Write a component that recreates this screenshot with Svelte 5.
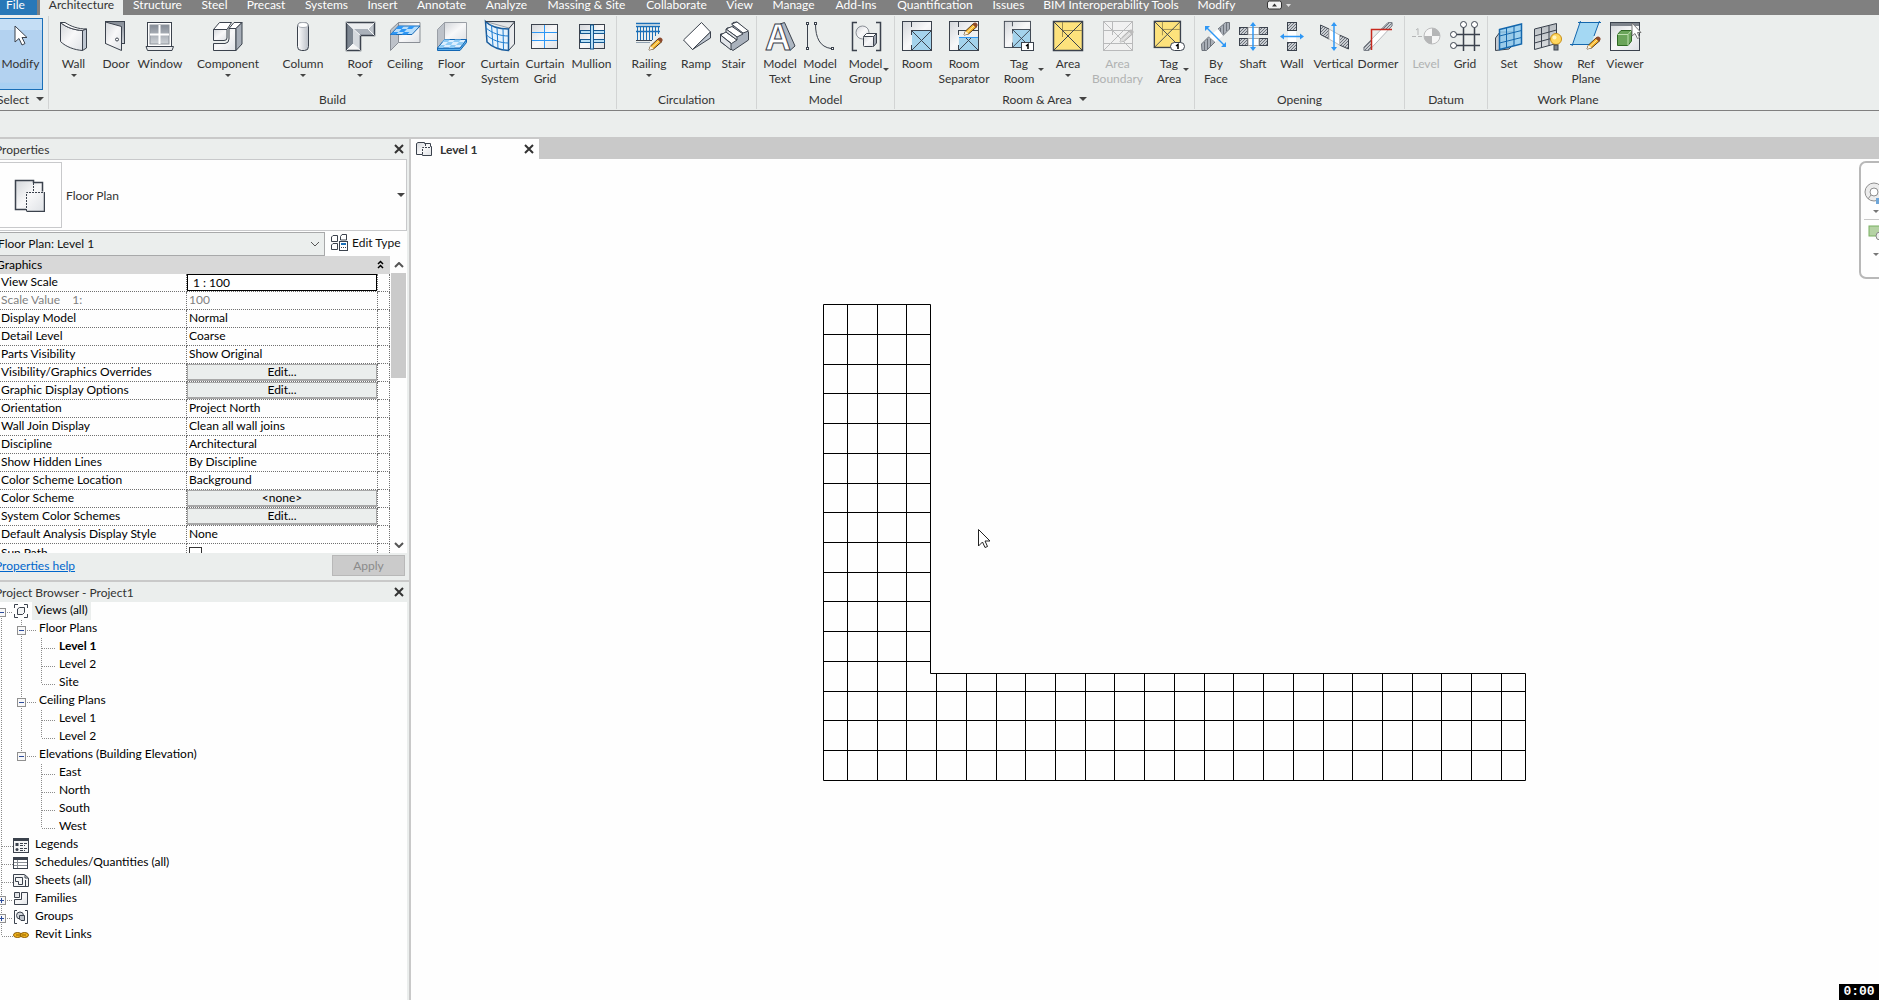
<script lang="ts">
	type Tool = {
		label: string[];
		icon: string;
		width: number;
		menu?: 'below' | 'side';
		disabled?: boolean;
	};
	type Panel = { title: string; tools: Tool[]; expandable?: boolean };
	type Property = { name: string; value: string; kind?: 'input' | 'button' | 'muted' | 'check' };
	type Node = {
		label: string;
		depth: number;
		icon?: string;
		toggle?: '+' | '-';
		last?: boolean;
		trunk?: boolean;
		bold?: boolean;
		selected?: boolean;
	};

	const tabs = [
		{ name: 'Architecture', width: 83 },
		{ name: 'Structure', width: 69 },
		{ name: 'Steel', width: 45 },
		{ name: 'Precast', width: 58 },
		{ name: 'Systems', width: 63 },
		{ name: 'Insert', width: 49 },
		{ name: 'Annotate', width: 69 },
		{ name: 'Analyze', width: 61 },
		{ name: 'Massing & Site', width: 99 },
		{ name: 'Collaborate', width: 81 },
		{ name: 'View', width: 45 },
		{ name: 'Manage', width: 63 },
		{ name: 'Add-Ins', width: 62 },
		{ name: 'Quantification', width: 96 },
		{ name: 'Issues', width: 51 },
		{ name: 'BIM Interoperability Tools', width: 154 },
		{ name: 'Modify', width: 57 }
	];
	let activeTab = $state('Architecture');

	const panels: Panel[] = [
		{
			title: 'Build',
			tools: [
				{ label: ['Wall'], icon: 'wall', width: 45, menu: 'below' },
				{ label: ['Door'], icon: 'door', width: 40 },
				{ label: ['Window'], icon: 'window', width: 48 },
				{ label: ['Component'], icon: 'component', width: 88, menu: 'below' },
				{ label: ['Column'], icon: 'column', width: 62, menu: 'below' },
				{ label: ['Roof'], icon: 'roof', width: 52, menu: 'below' },
				{ label: ['Ceiling'], icon: 'ceiling', width: 38 },
				{ label: ['Floor'], icon: 'floor', width: 55, menu: 'below' },
				{ label: ['Curtain', 'System'], icon: 'curtainSystem', width: 42 },
				{ label: ['Curtain', 'Grid'], icon: 'curtainGrid', width: 48 },
				{ label: ['Mullion'], icon: 'mullion', width: 45 }
			]
		},
		{
			title: 'Circulation',
			tools: [
				{ label: ['Railing'], icon: 'railing', width: 60, menu: 'below' },
				{ label: ['Ramp'], icon: 'ramp', width: 34 },
				{ label: ['Stair'], icon: 'stair', width: 41 }
			]
		},
		{
			title: 'Model',
			tools: [
				{ label: ['Model', 'Text'], icon: 'modelText', width: 42 },
				{ label: ['Model', 'Line'], icon: 'modelLine', width: 38 },
				{ label: ['Model', 'Group'], icon: 'modelGroup', width: 53, menu: 'side' }
			]
		},
		{
			title: 'Room & Area',
			expandable: true,
			tools: [
				{ label: ['Room'], icon: 'room', width: 40 },
				{ label: ['Room', 'Separator'], icon: 'roomSeparator', width: 54 },
				{ label: ['Tag', 'Room'], icon: 'tagRoom', width: 56, menu: 'side' },
				{ label: ['Area'], icon: 'area', width: 42, menu: 'below' },
				{ label: ['Area', 'Boundary'], icon: 'areaBoundary', width: 57, disabled: true },
				{ label: ['Tag', 'Area'], icon: 'tagArea', width: 46, menu: 'side' }
			]
		},
		{
			title: 'Opening',
			tools: [
				{ label: ['By', 'Face'], icon: 'byFace', width: 38 },
				{ label: ['Shaft'], icon: 'shaft', width: 36 },
				{ label: ['Wall'], icon: 'wallOpening', width: 42 },
				{ label: ['Vertical'], icon: 'vertical', width: 41 },
				{ label: ['Dormer'], icon: 'dormer', width: 48 }
			]
		},
		{
			title: 'Datum',
			tools: [
				{ label: ['Level'], icon: 'level', width: 38, disabled: true },
				{ label: ['Grid'], icon: 'grid', width: 40 }
			]
		},
		{
			title: 'Work Plane',
			tools: [
				{ label: ['Set'], icon: 'set', width: 38 },
				{ label: ['Show'], icon: 'show', width: 40 },
				{ label: ['Ref', 'Plane'], icon: 'refPlane', width: 36 },
				{ label: ['Viewer'], icon: 'viewer', width: 42 }
			]
		}
	];

	const properties: Property[] = [
		{ name: 'View Scale', value: '1 : 100', kind: 'input' },
		{ name: 'Scale Value    1:', value: '100', kind: 'muted' },
		{ name: 'Display Model', value: 'Normal' },
		{ name: 'Detail Level', value: 'Coarse' },
		{ name: 'Parts Visibility', value: 'Show Original' },
		{ name: 'Visibility/Graphics Overrides', value: 'Edit...', kind: 'button' },
		{ name: 'Graphic Display Options', value: 'Edit...', kind: 'button' },
		{ name: 'Orientation', value: 'Project North' },
		{ name: 'Wall Join Display', value: 'Clean all wall joins' },
		{ name: 'Discipline', value: 'Architectural' },
		{ name: 'Show Hidden Lines', value: 'By Discipline' },
		{ name: 'Color Scheme Location', value: 'Background' },
		{ name: 'Color Scheme', value: '<none>', kind: 'button' },
		{ name: 'System Color Schemes', value: 'Edit...', kind: 'button' },
		{ name: 'Default Analysis Display Style', value: 'None' },
		{ name: 'Sun Path', value: '', kind: 'check' }
	];

	const nodes: Node[] = [
		{ label: 'Views (all)', depth: 0, icon: 'views', toggle: '-', selected: true },
		{ label: 'Floor Plans', depth: 1, toggle: '-', trunk: true },
		{ label: 'Level 1', depth: 2, trunk: true, bold: true },
		{ label: 'Level 2', depth: 2, trunk: true },
		{ label: 'Site', depth: 2, trunk: true, last: true },
		{ label: 'Ceiling Plans', depth: 1, toggle: '-', trunk: true },
		{ label: 'Level 1', depth: 2, trunk: true },
		{ label: 'Level 2', depth: 2, trunk: true, last: true },
		{ label: 'Elevations (Building Elevation)', depth: 1, toggle: '-', last: true },
		{ label: 'East', depth: 2 },
		{ label: 'North', depth: 2 },
		{ label: 'South', depth: 2 },
		{ label: 'West', depth: 2, last: true },
		{ label: 'Legends', depth: 0, icon: 'legends' },
		{ label: 'Schedules/Quantities (all)', depth: 0, icon: 'schedules' },
		{ label: 'Sheets (all)', depth: 0, icon: 'sheets' },
		{ label: 'Families', depth: 0, icon: 'families', toggle: '+' },
		{ label: 'Groups', depth: 0, icon: 'groups', toggle: '+' },
		{ label: 'Revit Links', depth: 0, icon: 'links', last: true }
	];
	const guideWidth = [13, 36, 56];

	// ceiling grid: an L of tiles, clipped by its walls
	const STEP = 29.72;
	const columns = Array.from({ length: 23 }, (_, i) => ({
		x: Math.round(24 + i * STEP),
		top: i < 3 ? 0 : 369
	}));
	const rows = Array.from({ length: 15 }, (_, i) => ({
		y: Math.round(30 + i * STEP),
		right: i < 12 ? 107 : 702
	}));

	// icon parts
	const ink = '#3b424d';
	const blue = '#1a6fb8';
	const sky = '#2e97f5';
	const pencil = (x: number, y: number, grey = false) => `<g transform="translate(${x} ${y})">
		<path d="M1 13 2.500 9 10.500 1.500 14 4.500 5.500 12Z" fill="${grey ? '#d5d5d5' : '#f7b52c'}" stroke="${grey ? '#aaa' : '#54381c'}"/>
		<path d="M4 10.500 12 3" stroke="${grey ? '#eee' : '#fff0a8'}"/>
		<path d="M9.500 2.500 11 .800Q12.500 0 14 1.500T14 4.500L13 5.500Z" fill="${grey ? '#bbb' : '#8d4a2e'}"/>
		<path d="M1 13 2.500 9 5.500 12Z" fill="${grey ? '#ddd' : '#fff3dd'}"/></g>`;
	const roomBase = `<rect x="1.500" y="1.500" width="29" height="29" fill="url(#face)" stroke="${ink}"/>
		<rect x="10.500" y="10.500" width="20" height="20" fill="#a4d3ec" stroke="${ink}"/>
		<path d="M10.500 10.500 30.500 30.500M30.500 10.500 10.500 30.500M10.500 2V7" stroke="${ink}" fill="none"/>
		<path d="M10.500 15V25" stroke="#eef4f7"/>`;
	const areaBase = `<rect x="1.500" y="1.500" width="29" height="29" fill="#fde27c" stroke="${ink}" stroke-width="1.500"/>
		<path d="M10.500 2V17M10 10.500H30" stroke="#9a8a50" fill="none"/>
		<path d="M1.500 1.500 30.500 30.500M30.500 1.500 1.500 30.500" stroke="${ink}" fill="none"/>`;
	const arrowV = (x: number) =>
		`<path d="M${x} 4V29" stroke="${sky}" stroke-width="1.500"/><path d="M${x - 3} 6 ${x} 2 ${x + 3} 6ZM${x - 3} 27 ${x} 31 ${x + 3} 27Z" fill="${sky}"/>`;

	const icons: Record<string, string> = {
		modify: `<path d="M10 6V22L14 18.500 17 25 20 23.500 17 17.500H22Z" fill="#fff" stroke="${ink}"/>`,
		wall: `<g stroke="${ink}" stroke-linejoin="round"><path d="M2.500 2.500C9 8 17 10 24.500 10.500V30.500C17 30 8 27 2.500 21.500Z" fill="url(#face)"/>
			<path d="M2.500 2.500H7C13 6.500 20 9 28.500 9L24.500 10.500C17 10 9 8 2.500 2.500Z" fill="#fff"/><path d="M24.500 10.500 28.500 9V28L24.500 30.500Z" fill="#bfc7d1"/></g>`,
		door: `<rect x="5.500" y="1.500" width="19" height="22" fill="url(#dark)" stroke="${ink}"/>
			<path d="M5.500 2 21.500 6.500V30.500L5.500 23.500Z" fill="url(#face)" stroke="${ink}"/><circle cx="17" cy="19.500" r="1.500" fill="#fff" stroke="${ink}"/>`,
		window: `<rect x="3.500" y="2.500" width="24" height="24" fill="#fff" stroke="${ink}"/><rect x="6" y="5" width="19" height="19" fill="url(#dark)" stroke="#8d939b"/>
			<path d="M15.500 5V24M6 14.500H25" stroke="#fff" stroke-width="2"/><path d="M2 26.500H29.500L28 30.500H3.500Z" fill="#e8eaec" stroke="${ink}"/>`,
		component: `<g stroke="${ink}" stroke-linejoin="round"><path d="M1.500 23.500H13Q17 23 17 19V8.500H24V30.500H1.500Z" fill="url(#face)"/>
			<path d="M17 8.500 22 2.500H30L24 8.500Z" fill="#fff"/><path d="M24 8.500 30 2.500V24L24 30.500Z" fill="#a6adb7"/>
			<path d="M1.500 9.500H15V18Q15 20.500 12 20.500H1.500Z" fill="url(#face)"/><path d="M1.500 9.500 7.500 2.500H19.500L15 9.500Z" fill="#fff"/></g>`,
		column: `<rect x="10.500" y="2.500" width="11" height="28" rx="4" fill="url(#round)" stroke="${ink}"/><ellipse cx="16" cy="5" rx="5" ry="2.500" fill="#fff" stroke="#a9aeb5"/>`,
		roof: `<path d="M2.500 2.500H30.500L24 9H9Z" fill="#eceef0"/><path d="M2.500 2.500 9 9V24L2.500 30.500Z" fill="#7d8691"/><path d="M9 9H24L30.500 15.500H16.500Z" fill="#aab1ba"/><path d="M9 9 16.500 15.500V30.500L9 24Z" fill="#d5d9de"/>
			<path d="M30.500 2.500 24 9 30.500 15.500Z" fill="#bdc3ca"/><path d="M2.500 30.500 9 24 16.500 30.500Z" fill="#f5f5f5"/><path d="M2.500 2.500H30.500V15.500H16.500V30.500H2.500Z" fill="none" stroke="${ink}" stroke-width="1.500"/>
			<path d="M2.500 2.500 16.500 15.500M30.500 2.500 24 9 30.500 15.500M2.500 30.500 9 24 16.500 30.500" stroke="#f4f6f8" fill="none"/>`,
		ceiling: `<g stroke="#8a8f96"><path d="M9.500 2.500H31V22.500H9.500Z" fill="url(#face)"/><path d="M1.500 10 9.500 2.500V22.500L1.500 30.500Z" fill="#bdc2c9"/></g>
			<path d="M1.500 14.500 9.500 6H31L23 14.500Z" fill="#b7ddfb" stroke="#1367b4"/><path d="M7 9 9.500 6H15L12.500 9ZM18 9 20.500 6H26L23 9ZM10 12 12.500 9H18L15 12ZM4 12 1.500 14.500H7L9.500 12ZM15 12H20.500L18 14.500H12.500Z" fill="#2e97f5"/>`,
		floor: `<g stroke="#9a9fa6"><path d="M8.500 2.500H30.500V20H8.500Z" fill="url(#face)"/><path d="M1.500 9.500 8.500 2.500V20L1.500 28Z" fill="#bdc2c9"/></g>
			<path d="M1.500 28V30.500H24L30.500 22.500V19.500L24 28Z" fill="#5aaeea" stroke="#1367b4"/><path d="M1.500 28 8.500 19.500H30.500L24 28Z" fill="#dcefff" stroke="#1367b4"/><path d="M6 22 8.500 19.500H14L12 22ZM17 22 19 19.500H25L23 22ZM9 25 12 22H17L15 25ZM20 25 23 22H28L26 25ZM2.500 28 4.500 25H9L7 28ZM12.500 28 15 25H20L18 28Z" fill="#8ecbf5"/>`,
		curtainSystem: `<path d="M1.500 1.500 30.500 2 25 8Z" fill="#e4e6e8" stroke="#9aa0a8"/><path d="M24.500 9 30.500 2V24L24.500 30.500Z" fill="#e9ebed" stroke="${ink}"/>
			<path d="M1.500 1.500C6 6 15 9 24.500 9V30.500C15 30 8 27 3 22Z" fill="#e4f2fd" stroke="#1a5c9c" stroke-width="1.500"/><path d="M7.500 5 9 26.500M13 7.500 14 28.500M19 8.500 19.500 30M2 8C8 13 16 16 24.500 16M2.500 15C8 20 16 23 24.500 23" fill="none" stroke="#1a7bd0"/><path d="M1.500 1.500H31" stroke="${ink}"/>`,
		curtainGrid: `<rect x="2.500" y="4.500" width="26" height="24" fill="url(#face)" stroke="${ink}"/><path d="M15.500 5V28M3 12.500H28M3 20.500H28" stroke="${sky}"/>`,
		mullion: `<rect x="3.500" y="4.500" width="25" height="24" fill="url(#face)" stroke="${ink}"/><g fill="#b9e0f6" stroke="#15578f"><rect x="4.500" y="10.500" width="24" height="3"/><rect x="4.500" y="19.500" width="24" height="3"/><rect x="14.500" y="5" width="3" height="24"/></g>`,
		railing: `<path d="M3 3.500H27M3 6.500H27M3 11.500H27" stroke="${blue}" stroke-width="1.500"/><path d="M4.500 6V20M7.500 6V20M10.500 6V20M13.500 6V20M16.500 6V20M19.500 6V20M22.500 6V16M25.500 6V14" stroke="${blue}"/>
			<path d="M3 20.500H19" stroke="${ink}"/><path d="M3 22.500H17" stroke="#8fa0b0"/>${pencil(15, 17)}`,
		ramp: `<g stroke="${ink}" stroke-linejoin="round"><path d="M3.500 20 21.500 2.500 30.500 12 12.500 29.500Z" fill="#fff"/><path d="M30.500 12V18L12.500 29.500Z" fill="#bfc7d1"/></g>`,
		stair: `<g stroke="${ink}" stroke-linejoin="round"><path d="M15 2.500 19 2 30.500 12V20L15 30.500 2.500 22V14L9 13 9 8 15 7.500Z" fill="#aab2bd"/><path d="M2.500 15 8 12 19 20 13.500 23.500ZM8 9 14 6.500 25 14 19 17ZM13.500 4 19 2 30.500 11 25 13Z" fill="#fff"/><path d="M2.500 15V21.500L13 30V23.500ZM8 9V12L19 20V17Z" fill="#e2e5e9"/></g>`,
		modelText: `<path d="M16 4 20.500 2.500 31 26 26.500 30 21 27Z" fill="#aeb7c2" stroke="${ink}"/><text x="1" y="30" font-family="Liberation Sans" font-weight="bold" font-size="36" fill="#fff" stroke="${ink}">A</text>`,
		modelLine: `<g fill="none" stroke="${ink}"><path d="M3.500 4V28M11.500 4C11.500 18 16 27 27 28.500"/><g fill="#fff"><rect x="2.500" y="2.500" width="2" height="2"/><rect x="2.500" y="27.500" width="2" height="2"/><rect x="10.500" y="2.500" width="2" height="2"/><rect x="27.500" y="27.500" width="2" height="2"/></g></g>`,
		modelGroup: `<g stroke="${ink}"><path d="M7 2.500H2.500V30.500H7M26 2.500H30.500V30.500H26" fill="none" stroke-width="1.500"/><circle cx="12.500" cy="12.500" r="6.500" fill="url(#face)" stroke="#8a8f96"/>
			<path d="M13.500 16.500 16.500 13.500H26.500L23.500 16.500Z" fill="#fff"/><path d="M23.500 16.500 26.500 13.500V23L23.500 26.500Z" fill="#9da4ae"/><rect x="13.500" y="16.500" width="10" height="10" rx="1" fill="url(#face)"/></g>`,
		room: roomBase,
		roomSeparator: `${roomBase}<path d="M11 11H30V17H11Z" fill="#eef0f1"/><path d="M11 17.500H30" stroke="${sky}"/>${pencil(15, 2)}`,
		tagRoom: `<g transform="scale(.9)">${roomBase}</g><rect x="18.500" y="22.500" width="12" height="8" fill="#fff" stroke="${ink}"/><path d="M23 26 25 24.500V29" fill="none" stroke="#000" stroke-width="1.500"/>`,
		area: areaBase,
		areaBoundary: `<g stroke="#b9babb" fill="none"><rect x="1.500" y="1.500" width="29" height="29" fill="#f1f1f1"/><path d="M1.500 1.500 30.500 30.500M30.500 1.500 1.500 30.500M2 10.500H30M10.500 2V15M2 23.500H30"/></g>${pencil(17, 9, true)}`,
		tagArea: `<g transform="scale(.9)">${areaBase}</g><rect x="17.500" y="22.500" width="14" height="8" rx="4" fill="#fff" stroke="${ink}"/><path d="M23 26 25 24.500V29" fill="none" stroke="#000" stroke-width="1.500"/>`,
		byFace: `<path d="M1.500 24 9 16.500 15 22 6.500 30.500H2Z" fill="#a9afb7" stroke="#6d737b"/><path d="M18 9 25.500 2.500H29.500V9L23 15.500Z" fill="#a9afb7" stroke="#6d737b"/>
			<path d="M4.500 22V30M7.500 19V29M10.500 19V26M20.500 8V13M23.500 5V14M26.500 3V11" stroke="#6d737b"/>
			<path d="M9 16.500 18 9 23 15.500 15 22Z" fill="#fff"/><path d="M7 8 24 25" stroke="${sky}" stroke-width="1.500"/><path d="M5 6H10L5 11ZM26 27H21L26 22Z" fill="${sky}"/>`,
		shaft: `<g fill="url(#hatch)" stroke="${ink}"><rect x="2.500" y="7.500" width="8" height="7"/><rect x="22.500" y="7.500" width="8" height="7"/><rect x="2.500" y="18.500" width="8" height="7"/><rect x="22.500" y="18.500" width="8" height="7"/></g>
			<path d="M11 7.500H22V14.500H11ZM11 18.500H22V25.500H11Z" fill="#fff" stroke="#aaa"/>${arrowV(16)}`,
		wallOpening: `<g fill="url(#hatch)" stroke="${ink}"><rect x="11.500" y="2.500" width="9" height="8"/><rect x="11.500" y="22.500" width="9" height="8"/></g><rect x="12" y="11" width="8" height="11" fill="#fff"/>
			<path d="M6 16.500H26" stroke="${sky}" stroke-width="1.500"/><path d="M8 13.500 4 16.500 8 19.500ZM24 13.500 28 16.500 24 19.500Z" fill="${sky}"/>`,
		vertical: `<path d="M2.500 5 11 9V19L2.500 14.500ZM21.500 15 30.500 19V29L21.500 25Z" fill="url(#hatch)" stroke="${ink}"/><path d="M11 9 21.500 15V25L11 19Z" fill="#fff" stroke="#bbb"/>${arrowV(16)}`,
		dormer: `<path d="M2 30.500V27L26 2.500H30V6L7 30.500Z" fill="#fff" stroke="#b5b8bc"/><path d="M19.500 9 26 2.500H30V6L26.500 9.500ZM2 30.500V27L9.500 19.500V27.500L7 30.500Z" fill="url(#hatch)" stroke="#7b8088"/><path d="M9.500 30V9.500H30" fill="none" stroke="#c8281e" stroke-width="1.500"/>`,
		level: `<path d="M2 16.500H29" stroke="#b5b6b7" stroke-dasharray="4 2"/><circle cx="22" cy="16" r="8" fill="#f6f6f6" stroke="#bcbdbe"/><path d="M22 8A8 8 0 0 1 30 16H22ZM22 16V24A8 8 0 0 1 14 16Z" fill="#b5b6b7"/><path d="M6 10 8 8.500V15" fill="none" stroke="#b5b6b7"/>`,
		grid: `<g stroke="${ink}" stroke-width="1.500" fill="#fff"><path d="M14.500 7V31M25.500 7V31M7 14.500H31M7 25.500H31"/><g stroke-width="1"><circle cx="14.500" cy="4.500" r="3"/><circle cx="25.500" cy="4.500" r="3"/><circle cx="4.500" cy="14.500" r="3"/><circle cx="4.500" cy="25.500" r="3"/></g></g>`,
		set: `<path d="M2.500 18 7 12H21V24L16 29 2.500 30.500Z" fill="#c7ccd2" stroke="${ink}"/><path d="M6.500 9.500 28.500 4V24L6.500 29.500Z" fill="#8ecbef" fill-opacity=".8" stroke="#1467ad" stroke-width="1.500"/><path d="M13.500 8V27.500M21 6V26M6.500 16 28.500 10.500M6.500 23 28.500 17.500" stroke="#1467ad" fill="none"/>`,
		show: `<path d="M2.500 9 24.500 3.500V23.500L2.500 29.500Z" fill="url(#dark)" fill-opacity=".5" stroke="${ink}"/><path d="M9.500 7.500V27.500M17 5.500V25.500M2.500 16 24.500 10M2.500 23 24.500 17" stroke="${ink}" fill="none"/>
			<circle cx="24" cy="19" r="5.500" fill="#ffd75e" stroke="#c98f16"/><circle cx="22.500" cy="17.500" r="2" fill="#fff3c0"/><rect x="22" y="25" width="4" height="5" fill="#7d838b" stroke="${ink}"/>`,
		refPlane: `<path d="M10 2.500H29L21 24.500H2.500Z" fill="#a4d8f3"/><path d="M8 2.500H31M0 24.500H20M10.500 1 2 26M29.500 1 24 16" stroke="#1467ad" fill="none"/>${pencil(16, 16)}`,
		viewer: `<rect x="1.500" y="2.500" width="29" height="28" fill="url(#face)" stroke="${ink}"/><path d="M2 3H30V6H2Z" fill="#7d838b"/><path d="M8.500 14.500 12 10.500H22.500V21L19 25.500H8.500Z" fill="#6ba55a" stroke="#2f6a24"/><path d="M8.500 14.500H19V25.500M19 14.500 22.500 10.500" fill="none" stroke="#bfe0b0"/>
			<path d="M23 3V16L26 13.500 28.500 18.500 30.500 17.500 28.500 12.500H32Z" fill="#fff" stroke="#777"/>`
	};

	const treeIcons: Record<string, string> = {
		views: `<path d="M1.500 5V1.500H5M11 1.500H14.500V5M14.500 11V14.500H11M5 14.500H1.500V11" fill="none" stroke="${ink}"/><path d="M4.500 6 6.500 4.500H11.500V9.500L9.500 11.500H4.500Z" fill="#f4f5f6" stroke="${ink}"/>`,
		legends: `<rect x=".5" y="1.500" width="15" height="14" fill="#f4f5f6" stroke="${ink}"/><path d="M1 2H15V4H1Z" fill="${ink}"/><rect x="2.500" y="6" width="3" height="3" fill="${ink}"/><circle cx="4" cy="12.500" r="1.500" fill="${ink}"/><path d="M7 6.500H14M7 8.500H12M7 11.500H14M7 13.500H12" stroke="${ink}" stroke-dasharray="3 1"/>`,
		schedules: `<rect x=".5" y="2.500" width="14" height="11" fill="#fff" stroke="${ink}"/><path d="M1 3H14V5H1Z" fill="${ink}"/><path d="M4.500 5V13M1 7.500H14M1 10.500H14" stroke="#8a8f96"/>`,
		sheets: `<path d="M.5 1.500H11.500L15.500 5V13.500H.5Z" fill="#f4f5f6" stroke="${ink}"/><path d="M2.500 4.500H9.500V11.500H5.500V8.500H2.500ZM12 2V5H15M12.500 7V13" fill="none" stroke="${ink}"/>`,
		families: `<g fill="url(#face)" stroke="${ink}"><path d="M1.500 1.500H6.500V6.500H1.500ZM1.500 8.500H8.500V1.500H14.500V13.500H1.500Z"/></g>`,
		groups: `<g fill="none" stroke="${ink}"><path d="M4 1.500H1.500V14.500H4M12 1.500H14.500V14.500H12"/><circle cx="7" cy="6.500" r="3.500" fill="#d4d8dd"/><path d="M6.500 6.500H11.500V11.500H8L6.500 10Z" fill="#c0c6cd"/></g>`,
		links: `<g fill="none" stroke="#8a5a00"><ellipse cx="4.500" cy="8" rx="4" ry="2.500" fill="#f4b71e"/><ellipse cx="11.500" cy="8" rx="4" ry="2.500" fill="#f4b71e"/><path d="M3 8H7M9 8H13"/></g>`
	};

	// dotted connector lines of one tree row
	function guides(node: Node, first: boolean) {
		const parts = [`M1.500 ${first ? 10 : 0}V${node.depth === 0 && node.last ? 10 : 18}`];
		if (node.depth === 0) parts.push(`M${node.toggle ? 7 : 2} 10.500H13`);
		if (node.depth === 1) parts.push(`M21.500 0V${node.last ? 10 : 18}M27 10.500H36`);
		if (node.depth === 2) {
			if (node.trunk) parts.push('M21.500 0V18');
			parts.push(`M41.500 0V${node.last ? 10 : 18}M42 10.500H56`);
		}
		return parts.join('');
	}
</script>

{#snippet closeIcon()}
	<svg class="close-icon" viewBox="0 0 10 10"><path d="M1 1 9 9M9 1 1 9" /></svg>
{/snippet}

<svg class="defs" aria-hidden="true">
	<defs>
		<linearGradient id="face" x1="0" y1="0" x2="1" y2="1">
			<stop offset="0" stop-color="#d3d6da" /><stop offset=".5" stop-color="#f8f8f9" /><stop offset="1" stop-color="#dfe2e6" />
		</linearGradient>
		<linearGradient id="dark" x1="0" y1="0" x2="0" y2="1">
			<stop offset="0" stop-color="#858c96" /><stop offset="1" stop-color="#cfd3d8" />
		</linearGradient>
		<linearGradient id="round">
			<stop offset="0" stop-color="#fff" /><stop offset="1" stop-color="#b9bec6" />
		</linearGradient>
		<pattern id="hatch" width="3" height="3" patternUnits="userSpaceOnUse">
			<rect width="3" height="3" fill="#c9cdd2" /><path d="M0 3 3 0" stroke="#6d737b" />
		</pattern>
	</defs>
</svg>

<div class="app">
	<nav class="tabs">
		<button class="file">File</button>
		{#each tabs as tab}
			<button
				class:active={tab.name === activeTab}
				style:width="{tab.width}px"
				onclick={() => (activeTab = tab.name)}
			>
				{tab.name}
			</button>
		{/each}
		<button class="minimize" aria-label="Minimize ribbon">
			<svg width="25" height="10" viewBox="0 0 25 10">
				<rect x=".5" y="1" width="14" height="8" rx="2" fill="#f3f3f3" stroke="#333" />
				<path d="M5 6.500H10L7.500 3.500Z" fill="#333" /><path d="M19 4H24L21.500 7Z" fill="#ddd" />
			</svg>
		</button>
	</nav>

	<div class="ribbon">
		<section class="panel select">
			<div class="tools">
				<button class="tool modify">
					<svg class="icon" viewBox="0 0 32 32">{@html icons.modify}</svg>
					<span>Modify</span>
				</button>
			</div>
			<button class="panel-title">Select <i class="caret big"></i></button>
		</section>
		{#each panels as panel}
			<section class="panel">
				<div class="tools">
					{#each panel.tools as tool}
						<button class="tool" style:width="{tool.width}px" disabled={tool.disabled}>
							<svg class="icon" viewBox="0 0 32 32">{@html icons[tool.icon]}</svg>
							{#each tool.label as line}<span>{line}</span>{/each}
							{#if tool.menu}<i class="caret {tool.menu}"></i>{/if}
						</button>
					{/each}
				</div>
				<div class="panel-title">
					{panel.title}
					{#if panel.expandable}<i class="caret big"></i>{/if}
				</div>
			</section>
		{/each}
	</div>
	<div class="options-bar"></div>

	<div class="workspace">
		<aside class="dock">
			<header class="dock-title">
				Properties
				<button aria-label="Close Properties">{@render closeIcon()}</button>
			</header>
			<button class="type-selector">
				<span class="thumb">
					<svg width="32" height="34" viewBox="0 0 32 34">
						<path d="M2.500 2.500H20V5H29.500V14H31V33H13V31H2.500Z" fill="url(#face)" />
						<path d="M13 31.500H2.500V2.500H20.500V4.500H29.500V13.500M31.500 14V33.500H13.500" fill="none" stroke={ink} stroke-width="1.500" />
						<path d="M20.500 5V14M13.500 33V14.500H31" fill="none" stroke={ink} stroke-dasharray="2 1" />
					</svg>
				</span>
				<span class="type-name">Floor Plan</span>
				<i class="caret big"></i>
			</button>
			<div class="instance">
				<div class="filter">
					<select aria-label="Properties filter">
						<option>Floor Plan: Level 1</option>
					</select>
					<svg class="chevron" viewBox="0 0 10 6"><path d="M1 1 5 5 9 1" /></svg>
				</div>
				<button class="edit-type">
					<svg width="17" height="17" viewBox="0 0 17 17" fill="#fff" stroke={ink}>
						<path d="M.5 3 2 1.500H6.500V7.500H.5ZM9.500 2.500 11 .500H15.500V6H9.500ZM.5 11 2 9.500H6.500V15.500H.5Z" />
						<rect x="8.500" y="7.500" width="8" height="9" /><path d="M10 9H15V11H10Z" fill="#1a6fb8" stroke="none" /><path d="M10 13.500H15" stroke-dasharray="1 1" />
					</svg>
					Edit Type
				</button>
			</div>

			<div class="properties">
				<div class="sheet">
					<div class="group">
						Graphics
						<svg width="7" height="9" viewBox="0 0 7 9"><path d="M1 4 3.500 1.500 6 4M1 8 3.500 5.500 6 8" fill="none" stroke="#000" stroke-width="1.500" /></svg>
					</div>
					<table>
						<tbody>
							{#each properties as prop, i}
								<tr class:muted={prop.kind === 'muted'}>
									<th scope="row"><label for="prop-{i}">{prop.name}</label></th>
									<td class="value">
										{#if prop.kind === 'input'}
											<input id="prop-{i}" type="text" value={prop.value} />
										{:else if prop.kind === 'button'}
											<button id="prop-{i}">{prop.value}</button>
										{:else if prop.kind === 'check'}
											<input id="prop-{i}" type="checkbox" />
										{:else}
											<output id="prop-{i}">{prop.value}</output>
										{/if}
									</td>
									<td class="link"></td>
								</tr>
							{/each}
						</tbody>
					</table>
				</div>
				<div class="scrollbar">
					<svg class="chevron" viewBox="0 0 10 6"><path d="M1 5 5 1 9 5" /></svg>
					<div class="scroll-thumb"></div>
					<svg class="chevron" viewBox="0 0 10 6"><path d="M1 1 5 5 9 1" /></svg>
				</div>
			</div>
			<footer class="apply-bar">
				<a href="#help">Properties help</a>
				<button disabled>Apply</button>
			</footer>

			<header class="dock-title browser-title">
				Project Browser - Project1
				<button aria-label="Close Project Browser">{@render closeIcon()}</button>
			</header>
			<ul class="tree">
				{#each nodes as node, i}
					<li class:bold={node.bold} class:selected={node.selected}>
						<svg class="guides" width={guideWidth[node.depth]} height="18">
							<path d={guides(node, i === 0)} fill="none" stroke="#8c8c8c" stroke-dasharray="1 1" />
							{#if node.toggle}
								<g transform="translate({node.depth ? 17 : -3} 6)">
									<rect x=".5" y=".5" width="8" height="8" fill="#f8f8f8" stroke="#909090" />
									<path d={node.toggle === '+' ? 'M2 4.500H7M4.500 2V7' : 'M2 4.500H7'} stroke="#2b4a9b" />
								</g>
							{/if}
						</svg>
						{#if node.icon}
							<svg class="tree-icon" width="16" height="16" viewBox="0 0 16 16">{@html treeIcons[node.icon]}</svg>
						{/if}
						<span>{node.label}</span>
					</li>
				{/each}
			</ul>
		</aside>

		<main class="view">
			<div class="view-tabs">
				<div class="view-tab">
					<svg width="16" height="14" viewBox="0 0 16 14" stroke={ink}>
						<path d="M.5 1.500 2 .500H8.500V1.500H14.500V4.500H15.500V13.500H6.500V12.500H.5Z" fill="url(#face)" />
						<path d="M6.500 12V5.500H15M9.500 2V5" fill="none" stroke-dasharray="2 1" />
					</svg>
					<span>Level 1</span>
					<button aria-label="Close Level 1">{@render closeIcon()}</button>
				</div>
			</div>
			<div class="canvas">
				<svg class="plan" width="704" height="478" viewBox="0 0 704 478">
					<g transform="translate(.5 .5)">
						<path d="M0 0H107V369H702V476H0Z" />
						{#each columns as column}<path d="M{column.x} {column.top}V476" />{/each}
						{#each rows as row}<path d="M0 {row.y}H{row.right}" />{/each}
					</g>
				</svg>
				<svg class="cursor" width="13" height="20" viewBox="0 0 13 20">
					<path d="M.5 .5V17L4.500 13 7 18.500 9.500 17.500 7 12H12Z" fill="#fff" stroke="#222" />
				</svg>
				<div class="nav-bar">
					<button aria-label="Steering wheel">
						<svg width="20" height="32" viewBox="0 0 20 32">
							<circle cx="10" cy="10" r="9" fill="#ececec" stroke="#8f8f8f" /><circle cx="10" cy="10" r="4" fill="#fff" stroke="#8f8f8f" />
							<path d="M4 17 7 13" stroke="#8f8f8f" /><path d="M12 16H20V22H12Z" fill="#6fa6d8" /><path d="M9 28H15L12 31Z" fill="#777" />
						</svg>
					</button>
					<button aria-label="Zoom">
						<svg width="20" height="32" viewBox="0 0 20 32">
							<rect x="5" y="1" width="18" height="10" fill="#b5d2a4" stroke="#79b060" /><circle cx="16" cy="11" r="4" fill="#eee" stroke="#888" /><path d="M9 28H15L12 31Z" fill="#777" />
						</svg>
					</button>
				</div>
				<time class="timer">0:00</time>
			</div>
		</main>
	</div>
</div>

<style>
	:global(body) {
		overflow: hidden;
		background: #ebeeed;
	}

	.app {
		display: flex;
		flex-direction: column;
		height: 100vh;
		overflow: hidden;
		font: 12px/15px Lato, 'Open Sans', sans-serif;
		color: #333;
		background: #ebeeed;
	}

	.defs {
		position: absolute;
		width: 0;
		height: 0;
	}

	button {
		padding: 0;
		border: 0;
		font: inherit;
		color: inherit;
		background: none;
	}

	.tabs {
		display: flex;
		height: 20px;
		margin-top: -5px;
		background: #808080;
		color: #fff;
		flex-shrink: 0;
	}

	.tabs button {
		line-height: 20px;
		white-space: nowrap;
		flex-shrink: 0;
	}

	.tabs .file {
		width: 37px;
		margin-right: 3px;
		padding-left: 6px;
		text-align: left;
		background: #2878b8;
	}

	.tabs .active {
		color: #333;
		background: #ebeeed;
	}

	.tabs .minimize {
		display: flex;
		align-items: center;
		margin-left: 22px;
	}

	.ribbon {
		display: flex;
		height: 95px;
		border-bottom: 1px solid #808080;
		flex-shrink: 0;
	}

	.panel {
		display: flex;
		flex-direction: column;
		margin: 1px 0;
		padding: 0 2px;
		border-right: 1px solid #d2d4d4;
	}

	.panel:last-child {
		border-right: 0;
	}

	.tools {
		display: flex;
		height: 75px;
	}

	.tool {
		position: relative;
		display: flex;
		flex-direction: column;
		align-items: center;
		padding-top: 4px;
		white-space: nowrap;
	}

	.tool:disabled {
		color: #b0b2b2;
	}

	.icon {
		width: 32px;
		height: 32px;
		margin-bottom: 4px;
		fill: none;
		overflow: visible;
		flex-shrink: 0;
	}

	.select {
		width: 48px;
		padding: 0;
	}

	.modify {
		width: 45px;
		height: 72px;
		margin: 2px 0 0 -2px;
		padding-top: 1px;
		border: 1px solid #1a6fb8;
		background: linear-gradient(#c5def5 0, #c5def5 15%, #b3d2f0 16%, #b3d2f0 90%, #a9d0f2 92%);
	}

	.panel-title {
		display: flex;
		align-items: center;
		justify-content: center;
		gap: 7px;
		height: 16px;
	}

	.select .panel-title {
		justify-content: flex-start;
		margin-left: -3px;
	}

	.caret {
		border: 3px solid transparent;
		border-top-color: #444;
		border-bottom: 0;
	}

	.caret.big {
		border-width: 4px 4px 0;
	}

	.caret.below {
		margin-top: 3px;
	}

	.caret.side {
		position: absolute;
		right: 3px;
		bottom: 20px;
	}

	.options-bar {
		height: 26px;
		flex-shrink: 0;
	}

	.workspace {
		display: flex;
		flex: 1;
		min-height: 0;
		border-top: 2px solid #c9c9c9;
	}

	.dock {
		display: flex;
		flex-direction: column;
		width: 414px;
		margin-left: -5px;
		border-right: 2px solid #c9c9c9;
		flex-shrink: 0;
	}

	.dock-title {
		display: flex;
		align-items: center;
		justify-content: space-between;
		height: 20px;
		padding-right: 5px;
		flex-shrink: 0;
	}

	.close-icon {
		display: block;
		width: 10px;
		height: 10px;
		fill: none;
		stroke: #333;
		stroke-width: 2;
	}

	.type-selector {
		display: flex;
		align-items: center;
		height: 72px;
		margin-right: 2px;
		padding: 2px 1px 2px 0;
		border: 1px solid #c8c9cb;
		background: #fefefe;
		flex-shrink: 0;
	}

	.thumb {
		display: grid;
		place-items: center;
		width: 64px;
		height: 64px;
		border: 1px solid #c8c9cb;
	}

	.type-name {
		flex: 1;
		padding-left: 4px;
		text-align: left;
	}

	.instance {
		display: flex;
		height: 25px;
		margin-right: 2px;
		background: #fefefe;
		color: #111;
		flex-shrink: 0;
	}

	.filter {
		position: relative;
		width: 330px;
	}

	.filter select {
		width: 100%;
		height: 24px;
		margin-top: 1px;
		padding: 0 2px 2px;
		border: 1px solid #a8a9aa;
		border-radius: 0;
		appearance: none;
		font: inherit;
		color: inherit;
		background: #ebeeed;
	}

	.filter .chevron {
		position: absolute;
		top: 10px;
		right: 5px;
	}

	.chevron {
		width: 10px;
		height: 6px;
		fill: none;
		stroke: #555;
		stroke-width: 1;
	}

	.edit-type {
		display: flex;
		align-items: center;
		gap: 4px;
		padding: 0 0 3px 6px;
	}

	.properties {
		display: flex;
		height: 297px;
		margin-right: 2px;
		background: #fefefe;
		color: #000;
		overflow: hidden;
		flex-shrink: 0;
	}

	.sheet {
		flex: 1;
	}

	.group {
		display: flex;
		align-items: center;
		justify-content: space-between;
		height: 16px;
		padding: 0 6px 2px 1px;
		background: #d8d8d8;
	}

	table {
		width: 100%;
		border-spacing: 0;
		table-layout: fixed;
	}

	th,
	td {
		height: 15px;
		padding: 0 0 2px 2px;
		border: 1px dotted #707070;
		border-width: 0 1px 1px 0;
		font-weight: normal;
		text-align: left;
		white-space: nowrap;
	}

	th {
		padding-left: 6px;
		white-space: pre;
	}

	.value {
		width: 188px;
	}

	.link {
		width: 9px;
	}

	.muted {
		color: #808080;
	}

	.value output {
		display: block;
	}

	.value button,
	.value input[type='text'] {
		display: block;
		box-sizing: border-box;
		width: 190px;
		height: 17px;
		margin: 0 0 -2px -2px;
		border: 1px solid #a8a8a8;
		border-bottom-width: 2px;
		font: inherit;
		line-height: 14px;
		background: #ebeeed;
	}

	.value input[type='text'] {
		padding: 0 5px 1px;
		border: 1px solid #000;
		background: #fff;
	}

	.value input[type='checkbox'] {
		display: block;
		width: 13px;
		height: 13px;
		margin: 3px 0 0;
		border: 1px solid #333;
		appearance: none;
		background: #fff;
	}

	.scrollbar {
		display: flex;
		flex-direction: column;
		align-items: center;
		width: 17px;
		box-sizing: border-box;
		padding: 6px 1px 5px;
	}

	.scrollbar .chevron {
		stroke-width: 2;
	}

	.scroll-thumb {
		width: 15px;
		height: 105px;
		margin: 5px 0 auto;
		background: #cacaca;
	}

	.apply-bar {
		display: flex;
		align-items: center;
		justify-content: space-between;
		height: 24px;
		padding: 0 4px 3px 0;
		flex-shrink: 0;
	}

	.apply-bar a {
		color: #0066cc;
	}

	.apply-bar button {
		width: 73px;
		height: 21px;
		border: 1px solid #b8b8b8;
		color: #8a8a8a;
		background: #cbcbcb;
	}

	.browser-title {
		border-top: 2px solid #c9c9c9;
	}

	.tree {
		flex: 1;
		margin: 0 2px 0 0;
		padding: 0 0 0 5px;
		list-style: none;
		color: #000;
		background: #fefefe;
	}

	.tree li {
		display: flex;
		align-items: center;
		height: 18px;
	}

	.tree span {
		padding: 0 3px 2px;
		line-height: 16px;
	}

	.tree-icon {
		margin-right: 3px;
	}

	.guides {
		overflow: visible;
		flex-shrink: 0;
	}

	.bold {
		font-weight: bold;
	}

	.selected span {
		background: #ebeeed;
	}

	.view {
		display: flex;
		flex-direction: column;
		flex: 1;
		min-width: 0;
	}

	.view-tabs {
		display: flex;
		height: 20px;
		background: #c9c9c9;
	}

	.view-tab {
		display: flex;
		align-items: center;
		gap: 8px;
		width: 118px;
		padding: 0 5px;
		font-weight: bold;
		background: #fefefe;
	}

	.view-tab button {
		margin-left: auto;
	}

	.canvas {
		position: relative;
		flex: 1;
		background: #fefefe;
		overflow: hidden;
	}

	.plan {
		position: absolute;
		left: 412px;
		top: 145px;
		fill: none;
		stroke: #000;
	}

	.cursor {
		position: absolute;
		left: 567px;
		top: 370px;
	}

	.nav-bar {
		position: absolute;
		top: 2px;
		right: -20px;
		display: flex;
		flex-direction: column;
		box-sizing: border-box;
		width: 40px;
		height: 118px;
		padding: 14px 0 0 3px;
		border: 2px solid #b8b8b8;
		border-radius: 7px;
		background: #fefefe;
	}

	.nav-bar button {
		height: 42px;
		text-align: left;
	}

	.nav-bar button + button {
		border-top: 1px solid #c9c9c9;
	}

	.nav-bar svg {
		display: block;
	}

	.timer {
		position: absolute;
		right: 0;
		bottom: 0;
		width: 40px;
		font: bold 13px/16px 'Liberation Mono', monospace;
		text-align: center;
		color: #fff;
		background: #000;
	}
</style>
